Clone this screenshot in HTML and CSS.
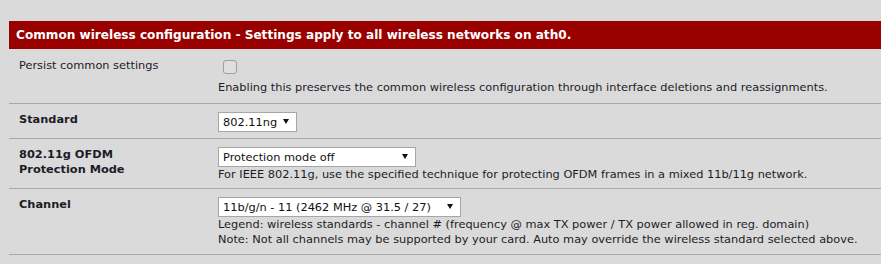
FILE: index.html
```html
<!DOCTYPE html>
<html>
<head>
<meta charset="utf-8">
<link rel="stylesheet" href="styles.css">
</head>
<body>
<div class="panel">
  <div class="panel-heading">Common wireless configuration - Settings apply to all wireless networks on ath0.</div>
  <div class="row row-persist">
    <div class="label normal">Persist common settings</div>
    <div class="value">
      <span class="checkbox"></span>
      <div class="help">Enabling this preserves the common wireless configuration through interface deletions and reassignments.</div>
    </div>
  </div>
  <div class="row">
    <div class="label">Standard</div>
    <div class="value">
      <span class="select sel-std">802.11ng</span>
    </div>
  </div>
  <div class="row">
    <div class="label">802.11g OFDM<br>Protection Mode</div>
    <div class="value">
      <span class="select sel-prot">Protection mode off</span>
      <div class="help">For IEEE 802.11g, use the specified technique for protecting OFDM frames in a mixed 11b/11g network.</div>
    </div>
  </div>
  <div class="row row-last">
    <div class="label">Channel</div>
    <div class="value">
      <span class="select sel-chan">11b/g/n - 11 (2462 MHz @ 31.5 / 27)</span>
      <div class="help">Legend: wireless standards - channel # (frequency @ max TX power / TX power allowed in reg. domain)<br>Note: Not all channels may be supported by your card. Auto may override the wireless standard selected above.</div>
    </div>
  </div>
</div>
</body>
</html>
```
FILE: styles.css
```css
html, body {
  margin: 0;
  padding: 0;
  background: #dadada;
  font-family: "DejaVu Sans", Verdana, sans-serif;
  font-size: 11.35px;
  color: #1c1c28;
}
.panel {
  padding: 21px 0 0 9px;
}
.panel-heading {
  background: #990000;
  color: #ffffff;
  font-weight: bold;
  font-size: 12.1px;
  height: 28px;
  line-height: 28px;
  padding-left: 7px;
  white-space: nowrap;
}
.row {
  display: grid;
  grid-template-columns: 209px 1fr;
  border-bottom: 1px solid #a9a9a9;
  padding: 8px 0 6px;
}
.row-persist {
  padding: 9px 0 8px;
}
.row-last {
  padding-bottom: 7px;
}
.label {
  padding-left: 10px;
  font-weight: bold;
  line-height: 15px;
}
.label.normal {
  font-weight: normal;
}
.value {
  line-height: 15px;
}
.checkbox {
  display: block;
  width: 12px;
  height: 12px;
  margin: 2px 0 6px 5px;
  border: 1px solid #a0a0a0;
  border-radius: 3px;
  background: #dedede;
}
.help {
  white-space: nowrap;
}
.select {
  display: inline-block;
  position: relative;
  box-sizing: border-box;
  height: 20px;
  line-height: 18px;
  border: 1px solid #a6a6a6;
  background: #ffffff;
  color: #111111;
  padding-left: 4px;
  vertical-align: top;
}
.select::after {
  content: "";
  position: absolute;
  right: 7px;
  top: 6px;
  border-left: 3px solid transparent;
  border-right: 3px solid transparent;
  border-top: 5px solid #111111;
}
.sel-std { width: 79px; }
.sel-prot { width: 198px; }
.sel-chan { width: 243px; }
```
